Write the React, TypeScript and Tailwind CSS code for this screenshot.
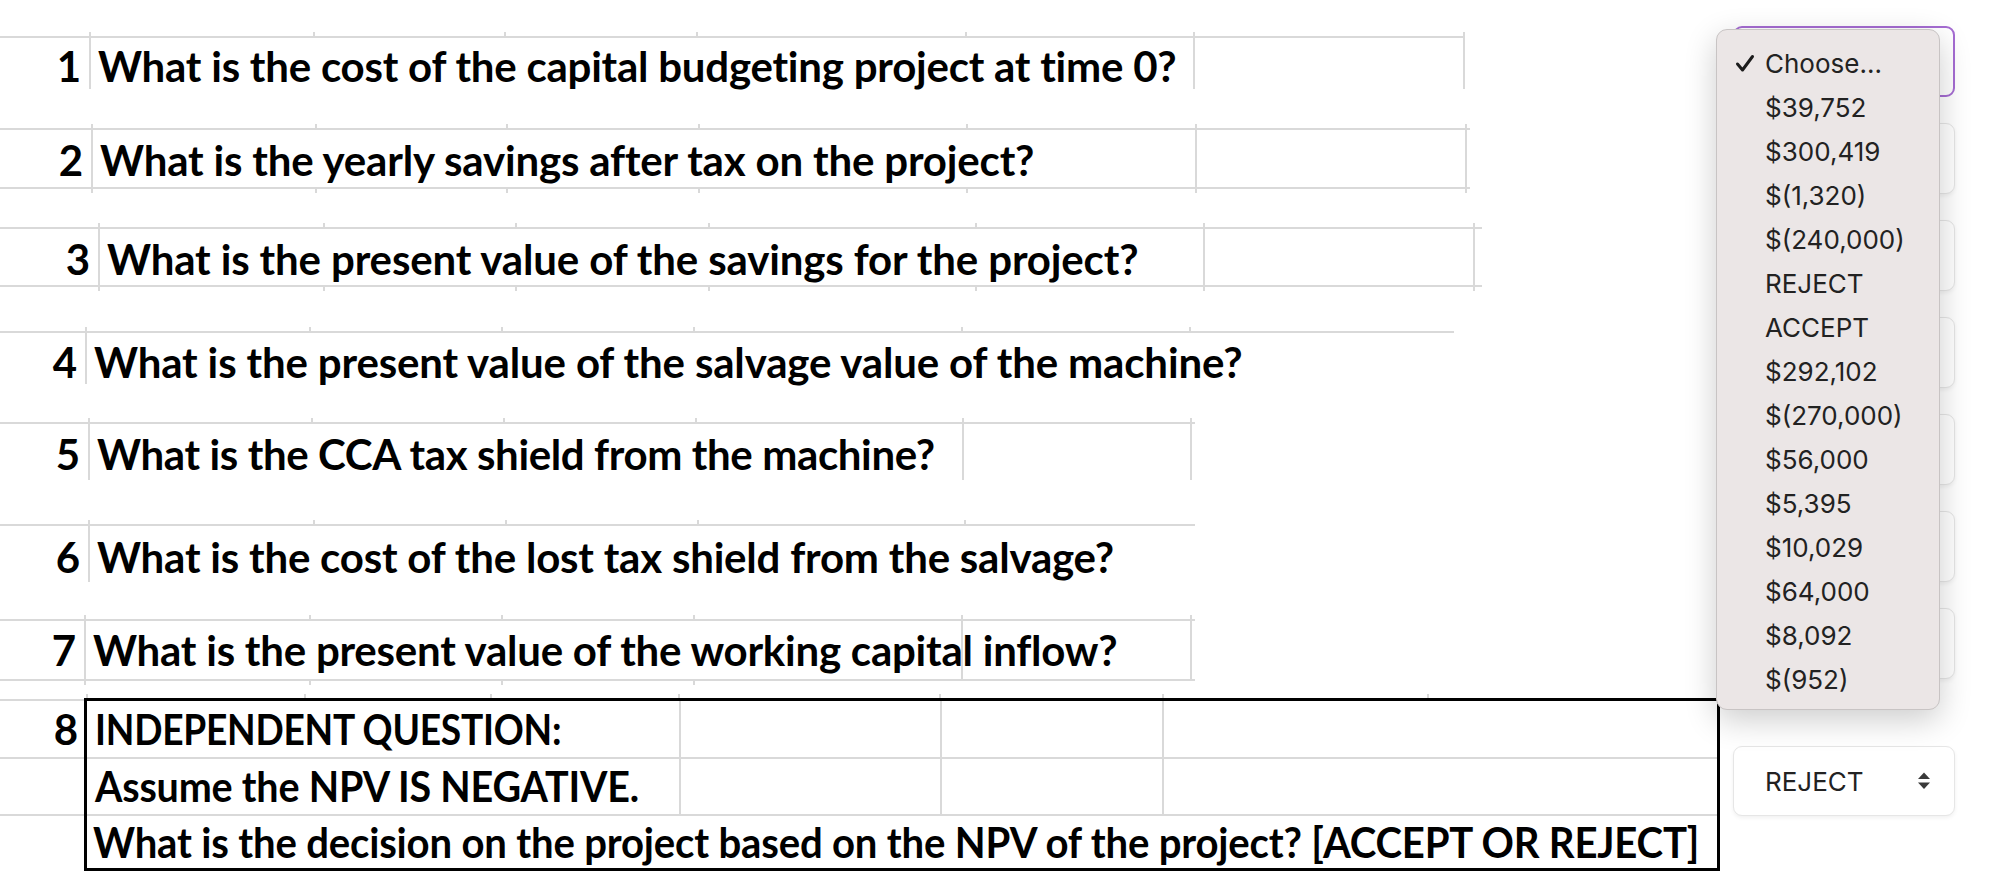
import React from "react";

type RowDef = {
  n: string;
  text: string;
  mt: number;
  bounds: number[];
  end: number;
  h: number;
  bottom: boolean;
  above: number[];
  below: number[];
  ty: number;
  ls: number;
};

const rows: RowDef[] = [
  {
    n: "1",
    text: "What is the cost of the capital budgeting project at time 0?",
    mt: 32,
    bounds: [89, 1193, 1463],
    end: 1465,
    h: 53,
    bottom: false,
    above: [89, 313, 504, 696, 965, 1193, 1463],
    below: [],
    ty: 30,
    ls: -0.23,
  },
  {
    n: "2",
    text: "What is the yearly savings after tax on the project?",
    mt: 35,
    bounds: [91, 1195, 1465],
    end: 1470,
    h: 61,
    bottom: true,
    above: [91, 315, 506, 698, 966, 1195, 1465],
    below: [91, 315, 506, 698, 966, 1195, 1465],
    ty: 32,
    ls: -0.17,
  },
  {
    n: "3",
    text: "What is the present value of the savings for the project?",
    mt: 30,
    bounds: [98, 1203, 1473],
    end: 1482,
    h: 60,
    bottom: true,
    above: [98, 323, 515, 708, 975, 1203, 1473],
    below: [98, 323, 515, 708, 975, 1203, 1473],
    ty: 32,
    ls: -0.14,
  },
  {
    n: "4",
    text: "What is the present value of the salvage value of the machine?",
    mt: 36,
    bounds: [85],
    end: 1454,
    h: 53,
    bottom: false,
    above: [85, 309, 501, 693, 961, 1189],
    below: [],
    ty: 31,
    ls: -0.15,
  },
  {
    n: "5",
    text: "What is the CCA tax shield from the machine?",
    mt: 34,
    bounds: [88, 962, 1190],
    end: 1195,
    h: 58,
    bottom: false,
    above: [88, 311, 503, 695, 962, 1190],
    below: [],
    ty: 32,
    ls: -0.38,
  },
  {
    n: "6",
    text: "What is the cost of the lost tax shield from the salvage?",
    mt: 40,
    bounds: [88],
    end: 1195,
    h: 58,
    bottom: false,
    above: [88, 313, 505, 697, 964],
    below: [],
    ty: 33,
    ls: -0.21,
  },
  {
    n: "7",
    text: "What is the present value of the working capital inflow?",
    mt: 33,
    bounds: [84, 961, 1190],
    end: 1195,
    h: 62,
    bottom: true,
    above: [84, 309, 501, 693, 961, 1190],
    below: [84, 309, 501, 693],
    ty: 31,
    ls: -0.23,
  },
];

const options = [
  "Choose...",
  "$39,752",
  "$300,419",
  "$(1,320)",
  "$(240,000)",
  "REJECT",
  "ACCEPT",
  "$292,102",
  "$(270,000)",
  "$56,000",
  "$5,395",
  "$10,029",
  "$64,000",
  "$8,092",
  "$(952)",
];

function Ticks({ xs }: { xs: number[] }) {
  return (
    <div className="flex h-[4px]">
      <div className="shrink-0" style={{ width: xs[0] }} />
      {xs.map((x, i) => (
        <div
          key={i}
          className="shrink-0 border-l-2 border-[#d9d9d9]"
          style={{ width: i < xs.length - 1 ? xs[i + 1] - x : 2 }}
        />
      ))}
    </div>
  );
}

function QRow({ r }: { r: RowDef }) {
  const b = r.bounds;
  const segs: React.ReactNode[] = [];
  for (let i = 1; i < b.length; i++) {
    const next = i < b.length - 1 ? b[i + 1] : r.end;
    segs.push(
      <div
        key={i}
        className="shrink-0 border-l-2 border-[#d9d9d9]"
        style={{ width: Math.max(next - b[i], 2) }}
      />
    );
  }
  const textEnd = b.length > 1 ? b[1] : r.end;
  const off = r.ty - 2 - 30;
  return (
    <div style={{ marginTop: r.mt }}>
      {r.above.length > 0 && <Ticks xs={r.above} />}
      <div
        className={
          r.bottom
            ? "flex border-t-2 border-b-2 border-[#d9d9d9]"
            : "flex border-t-2 border-[#d9d9d9]"
        }
        style={{ width: r.end, height: r.h }}
      >
        <div className="shrink-0 pr-[8px] text-right" style={{ width: b[0] }}>
          <span className="block leading-[60px]" style={{ marginTop: off }}>
            {r.n}
          </span>
        </div>
        <div
          className="shrink-0 whitespace-nowrap border-l-2 border-[#d9d9d9] pl-[7px]"
          style={{ width: textEnd - b[0] }}
        >
          <span
            className="block leading-[60px]"
            style={{ marginTop: off, letterSpacing: r.ls }}
          >
            {r.text}
          </span>
        </div>
        {segs}
      </div>
      {r.below.length > 0 && <Ticks xs={r.below} />}
    </div>
  );
}

function Check() {
  return (
    <svg width="20" height="19" viewBox="0 0 20 19" fill="none">
      <path
        d="M2.5 10 L7.5 16 L17.5 2.5"
        stroke="#1c1c1c"
        strokeWidth="3"
        strokeLinecap="round"
        strokeLinejoin="round"
      />
    </svg>
  );
}

function UpDown() {
  return (
    <svg width="14" height="18" viewBox="0 0 14 18">
      <path d="M7 0.5 L13 7 L1 7 Z" fill="#3a3a3a" />
      <path d="M1 10.5 L13 10.5 L7 17 Z" fill="#3a3a3a" />
    </svg>
  );
}

export default function App() {
  return (
    <div className="flex h-[876px] w-[1998px] overflow-hidden bg-white">
      {/* spreadsheet area */}
      <div className="w-[1720px] shrink-0 font-['Lato',sans-serif] text-[42px] font-bold text-black">
        {rows.map((r) => (
          <QRow key={r.n} r={r} />
        ))}

        {/* question 8 */}
        <div className="mt-[9px]">
          <Ticks xs={[86, 304, 490, 678, 939, 1162, 1427]} />
          <div className="flex">
            <div className="w-[84px] shrink-0">
              <div className="mt-[1px] h-[58px] border-t-2 border-[#d9d9d9] pr-[6px] text-right">
                <span className="block leading-[56px]">8</span>
              </div>
              <div className="h-[57px] border-t-2 border-[#d9d9d9]" />
              <div className="h-[57px] border-t-2 border-[#d9d9d9]" />
            </div>
            <div className="h-[173px] w-[1636px] shrink-0 border-[3px] border-black">
              <div className="flex h-[58px] border-b-2 border-[#d9d9d9]">
                <div className="w-[592px] shrink-0 whitespace-nowrap pl-[8px] leading-[56px]">
                  <span className="inline-block origin-left scale-x-[0.885] tracking-[-0.3px]">
                    INDEPENDENT QUESTION:
                  </span>
                </div>
                <div className="w-[261px] shrink-0 border-l-2 border-[#d9d9d9]" />
                <div className="w-[222px] shrink-0 border-l-2 border-[#d9d9d9]" />
                <div className="w-[265px] shrink-0 border-l-2 border-[#d9d9d9]" />
                <div className="flex-1" />
              </div>
              <div className="flex h-[57px] border-b-2 border-[#d9d9d9]">
                <div className="w-[592px] shrink-0 whitespace-nowrap pl-[8px] leading-[55px]">
                  <span className="inline-block origin-left scale-x-[0.94] tracking-[-0.2px]">
                    Assume the NPV IS NEGATIVE.
                  </span>
                </div>
                <div className="w-[261px] shrink-0 border-l-2 border-[#d9d9d9]" />
                <div className="w-[222px] shrink-0 border-l-2 border-[#d9d9d9]" />
                <div className="w-[265px] shrink-0 border-l-2 border-[#d9d9d9]" />
                <div className="flex-1" />
              </div>
              <div className="h-[52px] whitespace-nowrap pl-[6px] leading-[52px]">
                <span className="inline-block origin-left scale-x-[0.955] tracking-[-0.2px]">
                  What is the decision on the project based on the NPV of the project? [ACCEPT OR REJECT]
                </span>
              </div>
            </div>
          </div>
        </div>
      </div>

      {/* answer selects */}
      <div className="relative flex-1 pl-[13px] pt-[26px] font-['Inter',sans-serif]">
        <div className="flex w-[222px] flex-col gap-[26px]">
          <div className="h-[71px] rounded-[9px] border-2 border-[#a56cd2] bg-white" />
          <div className="h-[71px] rounded-[9px] border border-[#e6e6e6] bg-white shadow-[0_2px_4px_rgba(0,0,0,0.06)]" />
          <div className="h-[71px] rounded-[9px] border border-[#e6e6e6] bg-white shadow-[0_2px_4px_rgba(0,0,0,0.06)]" />
          <div className="h-[71px] rounded-[9px] border border-[#e6e6e6] bg-white shadow-[0_2px_4px_rgba(0,0,0,0.06)]" />
          <div className="h-[71px] rounded-[9px] border border-[#e6e6e6] bg-white shadow-[0_2px_4px_rgba(0,0,0,0.06)]" />
          <div className="h-[71px] rounded-[9px] border border-[#e6e6e6] bg-white shadow-[0_2px_4px_rgba(0,0,0,0.06)]" />
          <div className="h-[71px] rounded-[9px] border border-[#e6e6e6] bg-white shadow-[0_2px_4px_rgba(0,0,0,0.06)]" />
        </div>
        <div className="mt-[67px] flex h-[70px] w-[222px] items-center justify-between rounded-[9px] border border-[#e6e6e6] bg-white pl-[31px] pr-[23px] text-[26px] text-[#222] shadow-[0_2px_4px_rgba(0,0,0,0.06)]">
          <span>REJECT</span>
          <UpDown />
        </div>

        {/* open dropdown menu */}
        <div className="absolute left-[-4px] top-[29px] h-[681px] w-[224px] rounded-[11px] border border-[#c8c4c4] bg-[#ebe6e6] pb-[9px] pl-[18px] pt-[11px] shadow-[0_10px_32px_rgba(0,0,0,0.2)]">
          {options.map((o, i) => (
            <div key={o} className="flex h-[44px] items-center text-[26px] text-[#222]">
              <div className="flex w-[30px] shrink-0 items-center">{i === 0 ? <Check /> : null}</div>
              <span>{o}</span>
            </div>
          ))}
        </div>
      </div>
    </div>
  );
}
